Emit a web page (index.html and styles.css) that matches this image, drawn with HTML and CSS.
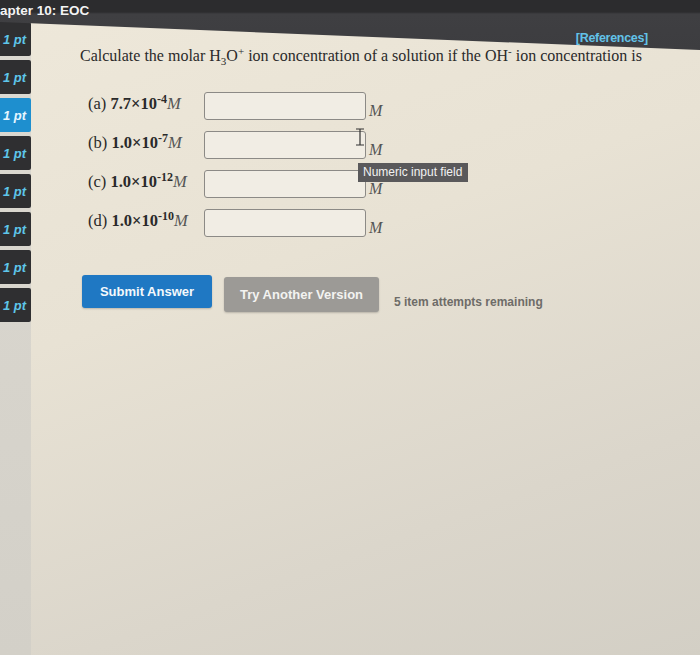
FILE: index.html
```html
<!DOCTYPE html>
<html>
<head>
<meta charset="utf-8">
<link rel="stylesheet" href="styles.css">
</head>
<body>
<div class="header">
  <div class="title">apter 10: EOC</div>
  <div class="refs">[References]</div>
</div>
<div class="layout">
  <div class="sidebar">
    <div class="tile">1 pt</div>
    <div class="tile">1 pt</div>
    <div class="tile active">1 pt</div>
    <div class="tile">1 pt</div>
    <div class="tile">1 pt</div>
    <div class="tile">1 pt</div>
    <div class="tile">1 pt</div>
    <div class="tile">1 pt</div>
  </div>
  <div class="main">
    <p class="question">Calculate the molar H<sub>3</sub>O<sup>+</sup> ion concentration of a solution if the OH<sup>-</sup> ion concentration is</p>
    <div class="rows">
      <div class="row">
        <div class="label">(a) <b>7.7&times;10<sup>-4</sup></b><i>M</i></div>
        <div class="field"><div class="box"></div></div>
        <div class="unit"><i>M</i></div>
      </div>
      <div class="row">
        <div class="label">(b) <b>1.0&times;10<sup>-7</sup></b><i>M</i></div>
        <div class="field">
          <div class="box"></div>
          <svg class="cursor" width="12" height="18" viewBox="0 0 12 18"><path d="M2 1 H10 M6 1 V17 M2 17 H10" stroke="#333" stroke-width="1.2" fill="none"/></svg>
          <div class="tooltip">Numeric input field</div>
        </div>
        <div class="unit"><i>M</i></div>
      </div>
      <div class="row">
        <div class="label">(c) <b>1.0&times;10<sup>-12</sup></b><i>M</i></div>
        <div class="field"><div class="box"></div></div>
        <div class="unit"><i>M</i></div>
      </div>
      <div class="row">
        <div class="label">(d) <b>1.0&times;10<sup>-10</sup></b><i>M</i></div>
        <div class="field"><div class="box"></div></div>
        <div class="unit"><i>M</i></div>
      </div>
    </div>
    <div class="actions">
      <div class="btn submit">Submit Answer</div>
      <div class="btn try">Try Another Version</div>
      <div class="attempts">5 item attempts remaining</div>
    </div>
  </div>
</div>
</body>
</html>
```
FILE: styles.css
```css
html, body {
  margin: 0;
  padding: 0;
}
body {
  width: 700px;
  height: 655px;
  overflow: hidden;
  background: linear-gradient(160deg, #eee8da 0%, #e8e2d4 40%, #dbd6cb 75%, #d3cfc5 100%);
  font-family: "Liberation Serif", serif;
  color: #2a2a2a;
}
.header {
  height: 50px;
  margin-bottom: -28px;
  background: linear-gradient(180deg, #2c2c2e 0px, #2c2c2e 12px, #3f3f42 14px, #3d3d40 100%);
  clip-path: polygon(0 0, 100% 0, 100% 50px, 0 22px);
  display: flex;
  justify-content: space-between;
  padding-right: 52px;
  font-family: "Liberation Sans", sans-serif;
  font-weight: bold;
}
.title {
  color: #f4f4f4;
  font-size: 13.5px;
  padding-top: 3px;
}
.refs {
  align-self: flex-end;
  color: #62c2e8;
  font-size: 12.5px;
  padding-bottom: 5px;
  letter-spacing: -0.3px;
}
.layout {
  display: flex;
  height: 633px;
}
.sidebar {
  width: 31px;
  background: linear-gradient(180deg, #dcd9d1, #d3d0c8);
  display: flex;
  flex-direction: column;
  gap: 4px;
}
.tile {
  height: 34px;
  background: #2f2f31;
  color: #5ec6ea;
  font-family: "Liberation Sans", sans-serif;
  font-weight: bold;
  font-style: italic;
  font-size: 13px;
  display: flex;
  align-items: center;
  justify-content: flex-end;
  padding-right: 5px;
  overflow: hidden;
  white-space: nowrap;
  border-radius: 0 2px 2px 0;
}
.tile.active {
  background: #1e8fcf;
  color: #e6f6ff;
}
.main {
  flex: 1;
  padding-left: 49px;
}
.question {
  margin: 24px 0 0 0;
  font-size: 16px;
  line-height: 20px;
  white-space: nowrap;
}
.question sub, .question sup {
  font-size: 11px;
  line-height: 0;
}
.rows {
  margin-top: 26px;
  padding-left: 8px;
  display: flex;
  flex-direction: column;
  gap: 11px;
}
.row {
  display: flex;
  align-items: center;
  height: 28px;
}
.label {
  width: 116px;
  font-size: 16.5px;
  white-space: nowrap;
  padding-bottom: 4px;
}
.label b {
  font-weight: bold;
}
.label sup {
  font-size: 12px;
  line-height: 0;
  font-weight: bold;
}
.label i, .unit i {
  font-style: italic;
  color: #555;
}
.field {
  position: relative;
}
.box {
  width: 160px;
  height: 26px;
  border: 1px solid #8c8a86;
  border-radius: 3px;
  background: #f1ede4;
}
.unit {
  align-self: flex-end;
  font-size: 16px;
  padding-left: 3px;
  line-height: 16px;
  margin-bottom: 1px;
}
.cursor {
  position: absolute;
  left: 150px;
  top: -3px;
}
.tooltip {
  position: absolute;
  left: 154px;
  top: 32px;
  background: #5a595b;
  color: #f2f2f2;
  font-family: "Liberation Sans", sans-serif;
  font-size: 12px;
  padding: 2px 6px 3px 5px;
  white-space: nowrap;
  z-index: 2;
}
.actions {
  margin-top: 38px;
  padding-left: 2px;
  display: flex;
  align-items: flex-start;
  font-family: "Liberation Sans", sans-serif;
  font-weight: bold;
}
.btn {
  border-radius: 3px;
  display: flex;
  align-items: center;
  justify-content: center;
  font-size: 13px;
  box-shadow: 0 1px 2px rgba(0,0,0,0.2);
}
.submit {
  width: 130px;
  height: 33px;
  background: #1f78c3;
  color: #f4f8fc;
}
.try {
  width: 155px;
  height: 35px;
  margin-left: 12px;
  margin-top: 2px;
  background: #9c9a96;
  color: #f3f3f1;
}
.attempts {
  margin-left: 15px;
  margin-top: 20px;
  font-size: 12px;
  color: #6e6c68;
}
```
